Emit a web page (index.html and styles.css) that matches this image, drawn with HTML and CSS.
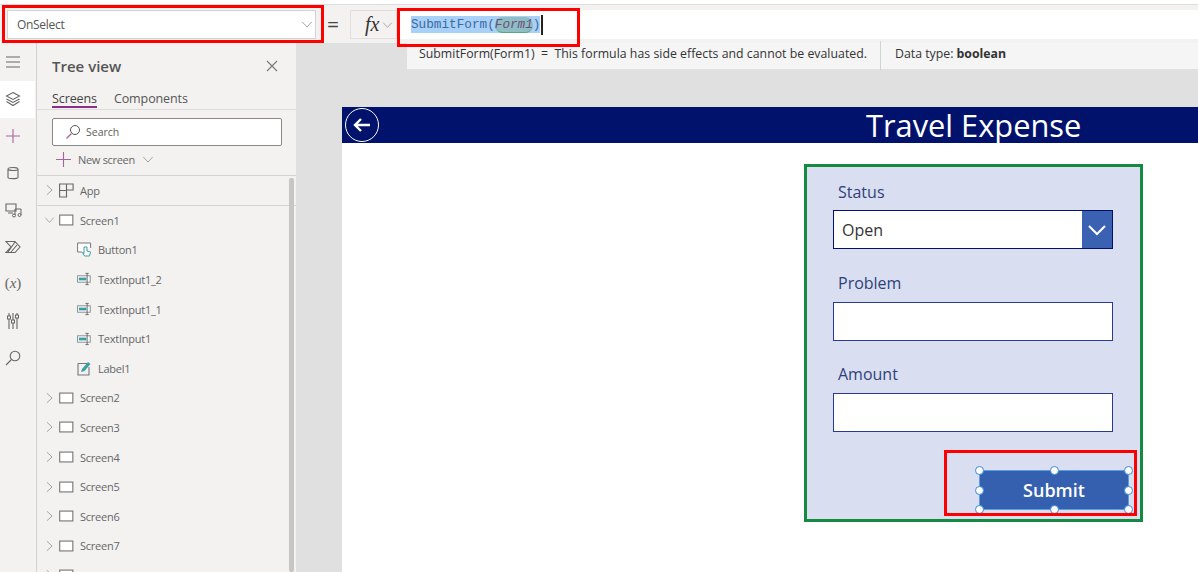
FILE: index.html
```html
<!DOCTYPE html>
<html lang="en">
<head>
<meta charset="utf-8">
<title>Travel Expense</title>
<link rel="stylesheet" href="styles.css">
</head>
<body>
<svg class="defs" width="0" height="0" aria-hidden="true">
  <symbol id="chev-r" viewBox="0 0 10 14"><path d="M2 1.500 8 7l-6 5.500" fill="none" stroke="#a19f9d" stroke-width="1.100"/></symbol>
  <symbol id="chev-d" viewBox="0 0 14 10"><path d="M1.500 2 7 8l5.500-6" fill="none" stroke="#a19f9d" stroke-width="1.100"/></symbol>
  <symbol id="screen" viewBox="0 0 16 14"><rect x=".75" y="1.750" width="14" height="10.500" fill="#fff" stroke="#777" stroke-width="1.200"/></symbol>
  <symbol id="input" viewBox="0 0 16 14"><rect x=".6" y="3.600" width="13.500" height="6.800" fill="#fff" stroke="#888" stroke-width="1"/><rect x="2" y="5.500" width="8" height="3" fill="#3a9ea5"/><path d="M9 1h3.500M9 13h3.500M10.800 1v12" fill="none" stroke="#666" stroke-width="1"/></symbol>
</svg>
<div class="app">
  <header class="topbar">
    <div class="prop">
      <span>OnSelect</span>
      <svg class="prop-chev" width="12" height="9"><use href="#chev-d"/></svg>
    </div>
    <div class="equals">=</div>
    <div class="fx"><i>fx</i><svg width="11" height="8"><use href="#chev-d"/></svg></div>
    <div class="formula"><span class="sel">SubmitForm(<em class="arg">Form1</em>)</span><span class="caret"></span></div>
  </header>
  <div class="main">
    <nav class="rail">
      <div class="rail-item first"><svg width="16" height="14" viewBox="0 0 16 14"><path d="M1 2h14M1 7h14M1 12h14" stroke="#666" stroke-width="1.100" fill="none"/></svg></div>
      <div class="rail-item active"><svg width="16" height="16" viewBox="0 0 16 16"><path d="M8 1.500 14.500 5 8 8.500 1.500 5zM1.500 8 8 11.500 14.500 8M1.500 10.500 8 14.500l6.500-4" fill="none" stroke="#666" stroke-width="1.100"/></svg></div>
      <div class="rail-item"><svg width="16" height="16" viewBox="0 0 16 16"><path d="M8 1v14M1 8h14" stroke="#a8629b" stroke-width="1.100" fill="none"/></svg></div>
      <div class="rail-item"><svg width="14" height="16" viewBox="0 0 14 16"><path d="M2 4v8.500c0 1.500 10 1.500 10 0V4M2 4c0-2 10-2 10 0s-10 2-10 0z" fill="none" stroke="#666" stroke-width="1.100"/></svg></div>
      <div class="rail-item"><svg width="17" height="16" viewBox="0 0 17 16"><path d="M1 2h10v7H1zM3 11h5" fill="none" stroke="#666" stroke-width="1.100"/><path d="M10 7h6v6M10 7v6" fill="none" stroke="#666"/><circle cx="9" cy="13.500" r="1.500" fill="none" stroke="#666"/><circle cx="14.500" cy="13" r="1.500" fill="none" stroke="#666"/></svg></div>
      <div class="rail-item"><svg width="16" height="14" viewBox="0 0 16 14"><path d="M1 1.500h9l5 5.500-5 5.500H1l5-5.500zM3 12l7-10M6 12l6-7" fill="none" stroke="#666" stroke-width="1.100"/></svg></div>
      <div class="rail-item var">(<i>x</i>)</div>
      <div class="rail-item"><svg width="14" height="18" viewBox="0 0 14 18"><path d="M3 1v16M7 1v16M11 1v16" stroke="#666" stroke-width="1.100" fill="none"/><rect x="1.500" y="4" width="3" height="3" fill="#f3f2f1" stroke="#666"/><rect x="9.500" y="3" width="3" height="3" fill="#f3f2f1" stroke="#666"/><rect x="5.500" y="8" width="3" height="3" fill="#f3f2f1" stroke="#666"/></svg></div>
      <div class="rail-item"><svg width="16" height="16" viewBox="0 0 16 16"><circle cx="10" cy="6" r="4.800" fill="none" stroke="#666" stroke-width="1.100"/><path d="M6.500 9.500 1 15" stroke="#666" stroke-width="1.100"/></svg></div>
    </nav>
    <aside class="tree">
      <div class="tree-head"><h2>Tree view</h2><svg width="12" height="12" viewBox="0 0 12 12"><path d="M1 1l10 10M11 1 1 11" stroke="#777" stroke-width="1.100"/></svg></div>
      <div class="tabs"><span class="tab on">Screens</span><span class="tab">Components</span></div>
      <div class="search-wrap">
        <div class="search"><svg width="16" height="16" viewBox="0 0 16 16"><circle cx="10" cy="6" r="4.500" fill="none" stroke="#555" stroke-width="1"/><path d="M6.500 9.500 1.500 14.500" stroke="#a8629b" stroke-width="1.200"/></svg><span>Search</span></div>
        <div class="new"><svg width="15" height="15" viewBox="0 0 15 15"><path d="M7.500 0v15M0 7.500h15" stroke="#a8629b" stroke-width="1.100" fill="none"/></svg><span>New screen</span><svg width="12" height="9"><use href="#chev-d"/></svg></div>
      </div>
      <div class="list">
        <div class="row app-row"><svg class="ch" width="8" height="12"><use href="#chev-r"/></svg><svg class="ic" width="15" height="15" viewBox="0 0 15 15"><path d="M.6 1h13.500v6H7.500v7H.6zM.6 7.500h7M7.500 1v6" fill="none" stroke="#666" stroke-width="1.100"/></svg><span>App</span></div>
        <div class="row"><svg class="ch" width="11" height="8"><use href="#chev-d"/></svg><svg class="ic" width="15" height="14"><use href="#screen"/></svg><span>Screen1</span></div>
        <div class="row kid"><svg class="ic" width="15" height="15" viewBox="0 0 15 15"><path d="M5 10H.6V1h13v5" fill="#fff" stroke="#777" stroke-width="1"/><path d="M7 5v6.500l-1.500-1 2 3.500h5l1-4-3.500-1V5z" fill="#fff" stroke="#3a9ea5" stroke-width="1"/></svg><span>Button1</span></div>
        <div class="row kid"><svg class="ic" width="15" height="14"><use href="#input"/></svg><span>TextInput1_2</span></div>
        <div class="row kid"><svg class="ic" width="15" height="14"><use href="#input"/></svg><span>TextInput1_1</span></div>
        <div class="row kid"><svg class="ic" width="15" height="14"><use href="#input"/></svg><span>TextInput1</span></div>
        <div class="row kid"><svg class="ic" width="15" height="15" viewBox="0 0 15 15"><path d="M1 2.500h9M1 2.500V14h11V6" fill="none" stroke="#777" stroke-width="1.100"/><path d="M4 11l1-3 6-7 2.500 2-6 7z" fill="#3a9ea5"/></svg><span>Label1</span></div>
        <div class="row"><svg class="ch" width="8" height="12"><use href="#chev-r"/></svg><svg class="ic" width="15" height="14"><use href="#screen"/></svg><span>Screen2</span></div>
        <div class="row"><svg class="ch" width="8" height="12"><use href="#chev-r"/></svg><svg class="ic" width="15" height="14"><use href="#screen"/></svg><span>Screen3</span></div>
        <div class="row"><svg class="ch" width="8" height="12"><use href="#chev-r"/></svg><svg class="ic" width="15" height="14"><use href="#screen"/></svg><span>Screen4</span></div>
        <div class="row"><svg class="ch" width="8" height="12"><use href="#chev-r"/></svg><svg class="ic" width="15" height="14"><use href="#screen"/></svg><span>Screen5</span></div>
        <div class="row"><svg class="ch" width="8" height="12"><use href="#chev-r"/></svg><svg class="ic" width="15" height="14"><use href="#screen"/></svg><span>Screen6</span></div>
        <div class="row"><svg class="ch" width="8" height="12"><use href="#chev-r"/></svg><svg class="ic" width="15" height="14"><use href="#screen"/></svg><span>Screen7</span></div>
        <div class="row"><svg class="ch" width="8" height="12"><use href="#chev-r"/></svg><svg class="ic" width="15" height="14"><use href="#screen"/></svg><span>Screen8</span></div>
      </div>
      <div class="scrollbar"></div>
    </aside>
    <section class="stage">
      <div class="hint">
        <span class="hint-a">SubmitForm(Form1)&nbsp; =&nbsp; This formula has side effects and cannot be evaluated.</span>
        <span class="hint-b">Data type: <b>boolean</b></span>
      </div>
      <div class="canvas">
        <div class="banner">
          <span class="back"><svg width="20" height="16" viewBox="0 0 20 16"><path d="M9 2 3 8l6 6M3 8h15" fill="none" stroke="#fff" stroke-width="2.400"/></svg></span>
          <h1>Travel Expense</h1>
        </div>
        <form class="form">
          <label class="lbl first">Status</label>
          <div class="field select"><span>Open</span><span class="sel-btn"><svg width="20" height="12" viewBox="0 0 20 12"><path d="M2 2l8 8 8-8" fill="none" stroke="#fff" stroke-width="2"/></svg></span></div>
          <label class="lbl">Problem</label>
          <div class="field"></div>
          <label class="lbl">Amount</label>
          <div class="field"></div>
          <div class="submit-row">
            <div class="submit">Submit
              <i class="h tl"></i><i class="h tc"></i><i class="h tr"></i>
              <i class="h ml"></i><i class="h mr"></i>
              <i class="h bl"></i><i class="h bc"></i><i class="h br"></i>
            </div>
          </div>
        </form>
      </div>
    </section>
  </div>
  <div class="mark m1"></div>
  <div class="mark m2"></div>
  <div class="mark m3"></div>
</div>
</body>
</html>
```
FILE: styles.css
```css
* { box-sizing: border-box; }
html, body { margin: 0; height: 100%; overflow: hidden; }
body { background: #fff; font-family: "Open Sans", "Noto Sans", sans-serif; color: #444; }
.defs { position: absolute; }
.app { position: relative; width: 1198px; height: 572px; overflow: hidden; padding-top: 4px; display: flex; flex-direction: column; }

.topbar { height: 39px; flex: none; background: #f3f2f1; border-top: 1px solid #dcdcdc; display: flex; align-items: flex-start; padding: 5px 0 0 7px; }
.prop { flex: none; width: 309px; height: 29px; background: #fff; border: 1px solid #d5d3d1; display: flex; align-items: center; justify-content: space-between; padding: 0 2px 0 9px; font-size: 12px; letter-spacing: -.3px; color: #555; }
.equals { flex: none; width: 34px; text-align: center; font-size: 21px; line-height: 29px; color: #444; }
.fx { flex: none; width: 47px; height: 29px; border: 1px solid #e1dfdd; display: flex; align-items: center; gap: 3px; padding-left: 14px; font-family: "Liberation Serif", serif; font-size: 20px; color: #333; }
.formula { flex: 1; height: 29px; margin-left: 3px; background: #fff; display: flex; align-items: center; padding-left: 11px; font-family: "Liberation Mono", monospace; font-size: 12.700px; color: #3a6aa5; }
.sel { background: #a9d0f7; height: 17px; line-height: 17px; }
.arg { color: #6b4f7b; background: #8fbdc4; border-bottom: 1px solid #5aa77a; border-radius: 8px; }
.caret { width: 2px; height: 20px; background: #222; margin-left: 1px; }

.main { flex: 1; min-height: 0; display: flex; }
.rail { width: 37px; flex: none; background: #f3f2f1; border-right: 1px solid #d5d3d1; display: flex; flex-direction: column; }
.rail-item { height: 37px; display: flex; align-items: center; justify-content: center; width: 35px; padding: 0 9px 2px 0; }
.rail-item.first { height: 38px; padding-bottom: 0; }
.rail-item.active { background: #fff; }
.rail-item.var { font-family: "Liberation Serif", serif; font-size: 15px; color: #666; }

.tree { position: relative; width: 259px; flex: none; background: #f3f2f1; }
.tree-head { height: 44px; display: flex; align-items: center; justify-content: space-between; padding: 4px 18px 3px 15px; }
.tree-head h2 { margin: 0; font-size: 15px; font-weight: 600; color: #555; }
.tabs { display: flex; gap: 17px; height: 23px; padding-left: 15px; font-size: 12.500px; color: #555; border-bottom: 1px solid #dedcda; letter-spacing: -.1px; }
.tab { height: 21px; line-height: 24px; }
.tab.on { color: #444; border-bottom: 2px solid #8b2e8b; }
.search-wrap { padding: 8px 15px 0; height: 66px; border-bottom: 1px solid #d5d3d1; }
.search { height: 28px; width: 230px; background: #fff; border: 1px solid #8a8886; border-radius: 2px; display: flex; align-items: center; gap: 5px; padding-left: 12px; font-size: 10.500px; color: #605e5c; }
.new { display: flex; align-items: center; gap: 7px; padding: 6px 0 0 4px; font-size: 11px; color: #666; letter-spacing: -.3px; }
.list { font-size: 11px; color: #666; letter-spacing: -.25px; }
.row { display: flex; align-items: center; height: 29.600px; padding-left: 7px; }
.row .ch { width: 11px; margin-right: 4px; }
.row .ic { margin-right: 6px; flex: none; }
.row.kid { padding-left: 40px; }
.row.app-row { height: 29.500px; border-bottom: 1px solid #d5d3d1; }
.scrollbar { position: absolute; right: 2px; top: 135px; bottom: 0; width: 5px; background: #c8c6c4; border-radius: 2px; }

.stage { flex: 1; min-width: 0; background: #e0e0e0; }
.hint { margin-left: 111px; height: 26px; background: #f5f5f5; display: flex; align-items: center; font-size: 12.300px; color: #333; }
.hint-a { width: 474px; padding: 0 0 4px 12px; border-right: 1px solid #d5d3d1; line-height: 26px; white-space: nowrap; letter-spacing: .02px; }
.hint-b { padding: 0 0 4px 14px; line-height: 26px; }
.canvas { margin: 38px 0 0 46px; height: 480px; background: #fff; }
.banner { height: 36px; background: #00126b; display: flex; align-items: center; color: #fff; }
.back { flex: none; width: 34px; height: 34px; margin-left: 3px; border: 1.500px solid #fff; border-radius: 50%; display: flex; align-items: center; justify-content: center; }
.banner h1 { margin: 0 0 0 487px; font-size: 30.800px; font-weight: 400; line-height: 36px; white-space: nowrap; }

.form { width: 339px; height: 358px; margin: 21px 0 0 462px; background: #d9dff0; border: 3px solid #15893f; padding: 0 0 0 26px; color: #2f3f7c; }
.lbl { display: block; height: 36px; padding: 6px 0 0 5px; font-size: 16px; line-height: 22px; }
.lbl.first { height: 43px; padding-top: 14px; }
.field { width: 280px; height: 39px; background: #fff; border: 1px solid #2a3a8c; margin-bottom: 16px; }
.select { border-color: #00126b; display: flex; align-items: center; justify-content: space-between; padding-left: 8px; font-size: 16px; color: #333; margin-bottom: 17px; }
.sel-btn { width: 30px; height: 37px; background: #3b62b2; display: flex; align-items: center; justify-content: center; }
.submit-row { padding: 22px 0 0 146px; }
.submit { position: relative; width: 150px; height: 40px; background: #3560b0; border: 1px solid #5aa0e0; display: flex; align-items: center; justify-content: center; color: #fff; font-size: 18px; font-weight: 600; }
.h { position: absolute; width: 9px; height: 9px; background: #fff; border: 1px solid #3a8adf; border-radius: 50%; }
.tl { left: -5px; top: -5px; } .tc { left: 70px; top: -5px; } .tr { right: -5px; top: -5px; }
.ml { left: -5px; top: 15px; } .mr { right: -5px; top: 15px; }
.bl { left: -5px; bottom: -5px; } .bc { left: 70px; bottom: -5px; } .br { right: -5px; bottom: -5px; }

.mark { position: absolute; border: 3px solid #f00; pointer-events: none; }
.m1 { left: 2px; top: 5px; width: 322px; height: 38px; }
.m2 { left: 397px; top: 8px; width: 183px; height: 39px; }
.m3 { left: 944px; top: 450px; width: 193px; height: 66px; }
```
